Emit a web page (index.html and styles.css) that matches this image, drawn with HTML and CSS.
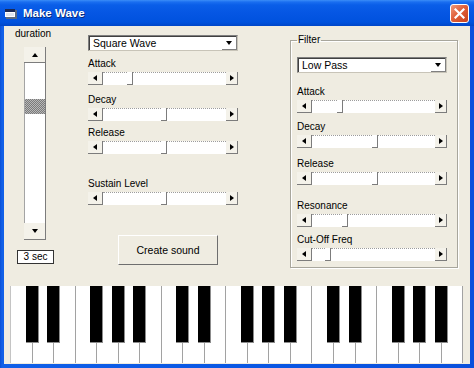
FILE: index.html
```html
<!DOCTYPE html>
<html lang="en">
<head>
    <meta charset="UTF-8">
    <title>Make Wave</title>
    <link rel="stylesheet" href="styles.css">
</head>
<body>
    <div class="window">
        <div class="titlebar">
            <svg class="app-icon" width="12" height="10" viewBox="0 0 12 10">
                <rect x="1" y="1" width="11" height="9" fill="#5a6a80"/>
                <rect x="0" y="0" width="10" height="8" fill="#ffffff"/>
                <rect x="0" y="0" width="10" height="3" fill="#1b2a55"/>
                <rect x="1" y="4" width="8" height="3" fill="#dfe6f0"/>
            </svg>
            <span class="title">Make Wave</span>
            <div class="close">
                <svg width="11" height="11" viewBox="0 0 11 11">
                    <path d="M1.5 1.5 L9.5 9.5 M9.5 1.5 L1.5 9.5" stroke="#fff" stroke-width="2.2" stroke-linecap="square"/>
                </svg>
            </div>
        </div>

        <div class="client">
            <div class="top">
                <!-- duration -->
                <div class="col-duration">
                    <div class="label dur-label">duration</div>
                    <div class="vscroll">
                        <div class="vbtn"><span class="tri tri-up"></span></div>
                        <div class="vtrack">
                            <div class="vspace"></div>
                            <div class="vthumb"></div>
                        </div>
                        <div class="vbtn vbtn-down"><span class="tri tri-down"></span></div>
                    </div>
                    <div class="readout">3 sec</div>
                </div>

                <!-- oscillator -->
                <div class="col-wave">
                    <div class="combo"><span>Square Wave</span><span class="drop"><span class="tri tri-down"></span></span></div>

                    <div class="field mt-7">
                        <div class="label">Attack</div>
                        <div class="hscroll">
                            <span class="arrow"><span class="tri tri-left"></span></span>
                            <span class="track" style="width:24px"></span>
                            <span class="thumb"></span>
                            <span class="track rest"></span>
                            <span class="arrow"><span class="tri tri-right"></span></span>
                        </div>
                    </div>
                    <div class="field mt-9">
                        <div class="label">Decay</div>
                        <div class="hscroll">
                            <span class="arrow"><span class="tri tri-left"></span></span>
                            <span class="track" style="width:58px"></span>
                            <span class="thumb"></span>
                            <span class="track rest"></span>
                            <span class="arrow"><span class="tri tri-right"></span></span>
                        </div>
                    </div>
                    <div class="field mt-6">
                        <div class="label">Release</div>
                        <div class="hscroll">
                            <span class="arrow"><span class="tri tri-left"></span></span>
                            <span class="track" style="width:58px"></span>
                            <span class="thumb"></span>
                            <span class="track rest"></span>
                            <span class="arrow"><span class="tri tri-right"></span></span>
                        </div>
                    </div>
                    <div class="field mt-24">
                        <div class="label">Sustain Level</div>
                        <div class="hscroll">
                            <span class="arrow"><span class="tri tri-left"></span></span>
                            <span class="track" style="width:58px"></span>
                            <span class="thumb"></span>
                            <span class="track rest"></span>
                            <span class="arrow"><span class="tri tri-right"></span></span>
                        </div>
                    </div>

                    <div class="push">Create sound</div>
                </div>

                <!-- filter -->
                <fieldset class="filter">
                    <legend>Filter</legend>
                    <div class="combo combo-filter"><span>Low Pass</span><span class="drop"><span class="tri tri-down"></span></span></div>

                    <div class="field mt-13">
                        <div class="label">Attack</div>
                        <div class="hscroll">
                            <span class="arrow"><span class="tri tri-left"></span></span>
                            <span class="track" style="width:25px"></span>
                            <span class="thumb"></span>
                            <span class="track rest"></span>
                            <span class="arrow"><span class="tri tri-right"></span></span>
                        </div>
                    </div>
                    <div class="field mt-8">
                        <div class="label">Decay</div>
                        <div class="hscroll">
                            <span class="arrow"><span class="tri tri-left"></span></span>
                            <span class="track" style="width:60px"></span>
                            <span class="thumb"></span>
                            <span class="track rest"></span>
                            <span class="arrow"><span class="tri tri-right"></span></span>
                        </div>
                    </div>
                    <div class="field mt-10">
                        <div class="label">Release</div>
                        <div class="hscroll">
                            <span class="arrow"><span class="tri tri-left"></span></span>
                            <span class="track" style="width:60px"></span>
                            <span class="thumb"></span>
                            <span class="track rest"></span>
                            <span class="arrow"><span class="tri tri-right"></span></span>
                        </div>
                    </div>
                    <div class="field mt-15">
                        <div class="label">Resonance</div>
                        <div class="hscroll">
                            <span class="arrow"><span class="tri tri-left"></span></span>
                            <span class="track" style="width:30px"></span>
                            <span class="thumb"></span>
                            <span class="track rest"></span>
                            <span class="arrow"><span class="tri tri-right"></span></span>
                        </div>
                    </div>
                    <div class="field mt-7">
                        <div class="label">Cut-Off Freq</div>
                        <div class="hscroll">
                            <span class="arrow"><span class="tri tri-left"></span></span>
                            <span class="track" style="width:13px"></span>
                            <span class="thumb"></span>
                            <span class="track rest"></span>
                            <span class="arrow"><span class="tri tri-right"></span></span>
                        </div>
                    </div>
                </fieldset>
            </div>

            <!-- keyboard: C D E F G A B x3 -->
            <div class="piano">
                <div class="key"><span class="black"></span></div>
                <div class="key"><span class="black"></span></div>
                <div class="key"></div>
                <div class="key"><span class="black"></span></div>
                <div class="key"><span class="black"></span></div>
                <div class="key"><span class="black"></span></div>
                <div class="key"></div>
                <div class="key"><span class="black"></span></div>
                <div class="key"><span class="black"></span></div>
                <div class="key"></div>
                <div class="key"><span class="black"></span></div>
                <div class="key"><span class="black"></span></div>
                <div class="key"><span class="black"></span></div>
                <div class="key"></div>
                <div class="key"><span class="black"></span></div>
                <div class="key"><span class="black"></span></div>
                <div class="key"></div>
                <div class="key"><span class="black"></span></div>
                <div class="key"><span class="black"></span></div>
                <div class="key"><span class="black"></span></div>
                <div class="key"></div>
            </div>
        </div>
    </div>
</body>
</html>
```

FILE: styles.css
```css
* {
    margin: 0;
    padding: 0;
    box-sizing: border-box;
}

body {
    font-family: "Liberation Sans", Arial, sans-serif;
    font-size: 10px;
    color: #000;
    background: #fff;
}

.window {
    width: 474px;
    height: 368px;
    background: linear-gradient(90deg, #0a4fd6, #1160e8 2px, #0a58e4 50%, #0a50dc);
    display: flex;
    flex-direction: column;
}

/* title bar */
.titlebar {
    height: 26px;
    display: flex;
    align-items: center;
    padding-left: 5px;
    background: linear-gradient(#3b8df7 0, #1a6ef0 2px, #0a5ee8 5px, #0556e3 50%, #0052de 85%, #0046c8 100%);
}

.app-icon {
    margin-right: 6px;
    margin-top: 1px;
}

.title {
    color: #fff;
    font-weight: bold;
    font-size: 11.5px;
    text-shadow: 1px 1px 0 #0a2a7a;
}

.close {
    margin-left: auto;
    margin-right: 5px;
    width: 19px;
    height: 19px;
    border: 1px solid #fff;
    border-radius: 3px;
    background: linear-gradient(135deg, #ef9a7c, #e0603a 45%, #c9421c);
    display: flex;
    align-items: center;
    justify-content: center;
}

/* client area */
.client {
    margin: 0 4px 4px;
    height: 338px;
    background: #efece1;
}

.top {
    display: flex;
    align-items: flex-start;
    height: 260px;
}

.label {
    line-height: 12px;
    height: 12px;
    white-space: nowrap;
}

/* duration column */
.col-duration {
    width: 84px;
    padding-top: 2px;
}

.dur-label {
    margin-left: 11px;
}

.vscroll {
    margin: 7px 0 0 20px;
    width: 22px;
    height: 193px;
    display: flex;
    flex-direction: column;
    border-right: 1px solid #7c7c7c;
}

.vbtn {
    height: 16px;
    border-bottom: 1px solid #7c7c7c;
    display: flex;
    align-items: center;
    justify-content: center;
    background: #f4f2ea;
}

.vbtn-down {
    height: 17px;
}

.vtrack {
    flex: 1;
    background: #fff;
    border-left: 1px solid #a4a4a4;
}

.vspace {
    height: 36px;
}

.vthumb {
    height: 15px;
    background: repeating-conic-gradient(#7a7a7a 0 25%, #b8b8b8 0 50%) 0 0 / 2px 2px;
}

.readout {
    margin: 10px 0 0 13px;
    width: 37px;
    height: 14px;
    border: 1px solid #333;
    background: #fff;
    text-align: center;
    line-height: 12px;
}

/* triangles */
.tri {
    display: block;
    width: 0;
    height: 0;
}

.tri-up {
    border-left: 3px solid transparent;
    border-right: 3px solid transparent;
    border-bottom: 4px solid #000;
}

.tri-down {
    border-left: 3px solid transparent;
    border-right: 3px solid transparent;
    border-top: 4px solid #000;
}

.tri-left {
    border-top: 3px solid transparent;
    border-bottom: 3px solid transparent;
    border-right: 4px solid #000;
}

.tri-right {
    border-top: 3px solid transparent;
    border-bottom: 3px solid transparent;
    border-left: 4px solid #000;
}

/* wave column */
.col-wave {
    width: 150px;
    padding-top: 9px;
}

.combo {
    width: 150px;
    height: 16px;
    background: #fff;
    border-top: 1px solid #7f7f7f;
    border-left: 1px solid #7f7f7f;
    border-right: 1px solid #c8c4b8;
    border-bottom: 1px solid #c8c4b8;
    box-shadow: inset 1px 1px 0 #404040;
    display: flex;
    align-items: center;
    justify-content: space-between;
    padding-left: 4px;
    font-size: 10.5px;
}

.drop {
    width: 15px;
    height: 100%;
    display: flex;
    align-items: center;
    justify-content: center;
    border-right: 1px solid #808080;
    border-bottom: 1px solid #808080;
}

.field .label {
    margin-bottom: 2px;
}

.mt-6 { margin-top: 6px; }
.mt-7 { margin-top: 7px; }
.mt-8 { margin-top: 8px; }
.mt-9 { margin-top: 9px; }
.mt-10 { margin-top: 10px; }
.mt-13 { margin-top: 13px; }
.mt-15 { margin-top: 15px; }
.mt-24 { margin-top: 24px; }

.hscroll {
    display: flex;
    width: 150px;
    height: 13px;
}

.arrow {
    flex: none;
    width: 15px;
    background: #f4f2ea;
    border-right: 1px solid #7c7c7c;
    border-bottom: 1px solid #7c7c7c;
    display: flex;
    align-items: center;
    justify-content: center;
}

.arrow:last-child {
    width: 12px;
}

.track {
    flex: none;
    background: #fff;
    border-top: 1px dotted #9c9c9c;
}

.track.rest {
    flex: 1;
}

.thumb {
    flex: none;
    width: 6px;
    background: #fff;
    border-right: 1px solid #7c7c7c;
    border-bottom: 1px solid #7c7c7c;
}

.push {
    margin: 30px 0 0 30px;
    width: 100px;
    height: 30px;
    border-right: 1px solid #6e6e6e;
    border-bottom: 1px solid #6e6e6e;
    border-top: 1px solid #fff;
    border-left: 1px solid #fff;
    display: flex;
    align-items: center;
    justify-content: center;
    font-size: 10.5px;
}

/* filter group */
.filter {
    margin: 8px 0 0 52px;
    width: 168px;
    border: 1px solid #a8a69c;
    box-shadow: 1px 1px 0 #fff, inset 1px 1px 0 #fff;
    padding: 0 6px 6px;
}

.filter legend {
    padding: 0 1px;
    line-height: 12px;
    font-size: 10px;
}

.combo-filter {
    margin-top: 11px;
}

/* keyboard */
.piano {
    display: flex;
    height: 77px;
    margin: 0 7px 0 6px;
    border-left: 1px solid #c4c4c4;
}

.key {
    flex: 1;
    position: relative;
    background: #fff;
    border-right: 1px solid #a2a2a2;
}

.black {
    position: absolute;
    top: 0;
    right: -7px;
    width: 13px;
    height: 57px;
    background: #000;
    border-right: 1px solid #8c8c8c;
    border-bottom: 1px solid #8c8c8c;
    z-index: 1;
}
```
